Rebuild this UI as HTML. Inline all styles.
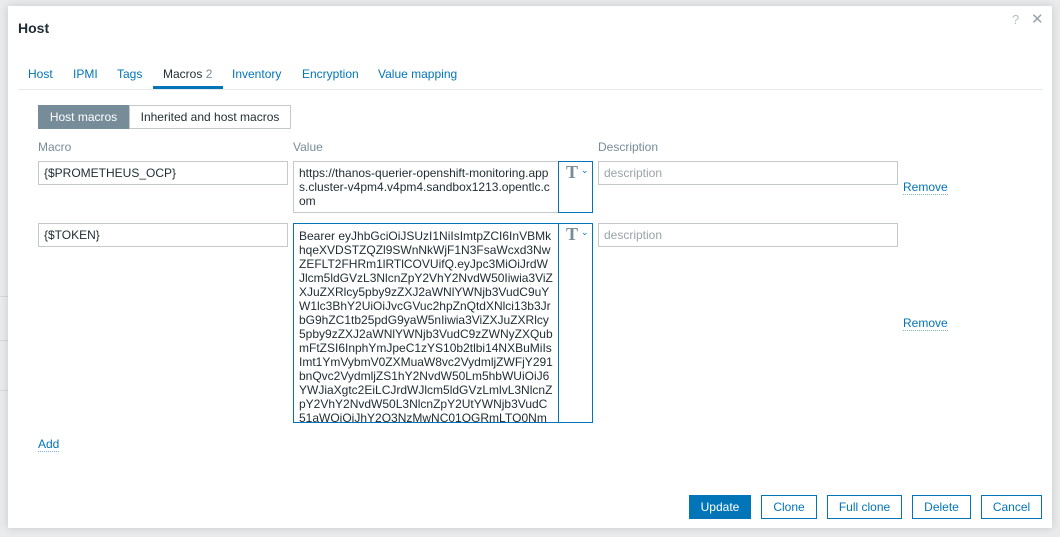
<!DOCTYPE html>
<html><head><style>
*{box-sizing:border-box;margin:0;padding:0}
body{width:1060px;height:537px;background:#e9ebec;font-family:"Liberation Sans",sans-serif;font-size:12px;color:#1f2c33;position:relative;overflow:hidden}
.a{position:absolute}
.dlg{left:8px;top:6px;width:1044px;height:522px;background:#fff;box-shadow:0 0 8px rgba(0,0,0,.15)}
.tab{top:67px;font-size:12px;color:#0275b8}
.inp{border:1px solid #c5c9cc;background:#fff;padding:4px 5px;font-size:12px}
.ph{color:#9aa3a8}
.lbl{color:#768d99}
.link{color:#0275b8;border-bottom:1px dotted #7fb6da;line-height:14px}
.btn{top:495px;height:24px;border:1px solid #0275b8;color:#0275b8;text-align:center;line-height:22px;background:#fff}
.ta{border:1px solid #0275b8;font-size:12px;line-height:14px;padding:5px 5px;overflow:hidden;word-break:break-all;color:#1f2c33}
.tb{border:1px solid #0275b8;border-left:none;}
.T{font-family:"Liberation Serif",serif;font-size:18px;color:#768d99;font-weight:bold;left:7px;top:0}
.car{left:22px;top:3px;color:#0275b8;font-size:9px}
</style></head><body>
<div class="a" style="left:0;top:296px;width:8px;height:1px;background:#d5d9db"></div>
<div class="a" style="left:0;top:340px;width:8px;height:1px;background:#d5d9db"></div>
<div class="a" style="left:0;top:390px;width:8px;height:1px;background:#d5d9db"></div>
<div class="a dlg"></div>
<div class="a" style="left:18px;top:20px;font-size:14px;font-weight:bold;color:#1f2c33">Host</div>
<div class="a" style="left:1012px;top:12px;color:#b5bcc0;font-size:13px">?</div>
<div class="a" style="left:1031px;top:10px;color:#9aa3a8;font-size:15px">✕</div>
<div class="a tab" style="left:28px">Host</div>
<div class="a tab" style="left:73px">IPMI</div>
<div class="a tab" style="left:117px">Tags</div>
<div class="a tab" style="left:163px;color:#1f2c33">Macros <span style="color:#768d99">2</span></div>
<div class="a tab" style="left:232px">Inventory</div>
<div class="a tab" style="left:302px">Encryption</div>
<div class="a tab" style="left:378px">Value mapping</div>
<div class="a" style="left:18px;top:89px;width:1025px;height:1px;background:#e6e8e9"></div>
<div class="a" style="left:153px;top:86px;width:70px;height:3px;background:#0275b8"></div>
<div class="a" style="left:38px;top:105px;width:91px;height:24px;background:#768d99;color:#fff;line-height:24px;text-align:center">Host macros</div>
<div class="a" style="left:129px;top:105px;width:162px;height:24px;border:1px solid #c5c9cc;line-height:22px;text-align:center">Inherited and host macros</div>
<div class="a lbl" style="left:38px;top:140px">Macro</div>
<div class="a lbl" style="left:293px;top:140px">Value</div>
<div class="a lbl" style="left:598px;top:140px">Description</div>
<div class="a inp" style="left:38px;top:161px;width:250px;height:24px">{$PROMETHEUS_OCP}</div>
<div class="a inp" style="left:293px;top:161px;width:266px;height:52px;line-height:14px;padding-top:4px;word-break:break-all">https://thanos-querier-openshift-monitoring.apps.cluster-v4pm4.v4pm4.sandbox1213.opentlc.com</div>
<div class="a tb" style="left:558px;top:161px;width:35px;height:52px;border-left:1px solid #0275b8"><span class="a T">T</span><span class="a car">⌄</span></div>
<div class="a inp ph" style="left:598px;top:161px;width:300px;height:24px">description</div>
<div class="a link" style="left:903px;top:180px">Remove</div>
<div class="a inp" style="left:38px;top:223px;width:250px;height:24px">{$TOKEN}</div>
<div class="a ta" style="left:293px;top:223px;width:266px;height:200px">Bearer eyJhbGciOiJSUzI1NiIsImtpZCI6InVBMkhqeXVDSTZQZl9SWnNkWjF1N3FsaWcxd3NwZEFLT2FHRm1lRTlCOVUifQ.eyJpc3MiOiJrdWJlcm5ldGVzL3NlcnZpY2VhY2NvdW50Iiwia3ViZXJuZXRlcy5pby9zZXJ2aWNlYWNjb3VudC9uYW1lc3BhY2UiOiJvcGVuc2hpZnQtdXNlci13b3JrbG9hZC1tb25pdG9yaW5nIiwia3ViZXJuZXRlcy5pby9zZXJ2aWNlYWNjb3VudC9zZWNyZXQubmFtZSI6InphYmJpeC1zYS10b2tlbi14NXBuMiIsImt1YmVybmV0ZXMuaW8vc2VydmljZWFjY291bnQvc2VydmljZS1hY2NvdW50Lm5hbWUiOiJ6YWJiaXgtc2EiLCJrdWJlcm5ldGVzLmlvL3NlcnZpY2VhY2NvdW50L3NlcnZpY2UtYWNjb3VudC51aWQiOiJhY2Q3NzMwNC01OGRmLTQ0Nm</div>
<div class="a tb" style="left:558px;top:223px;width:35px;height:200px;border-left:1px solid #0275b8"><span class="a T">T</span><span class="a car">⌄</span></div>
<div class="a inp ph" style="left:598px;top:223px;width:300px;height:24px">description</div>
<div class="a link" style="left:903px;top:316px">Remove</div>
<div class="a link" style="left:38px;top:437px">Add</div>
<div class="a btn" style="left:689px;width:62px;background:#0275b8;color:#fff">Update</div>
<div class="a btn" style="left:761px;width:56px">Clone</div>
<div class="a btn" style="left:827px;width:75px">Full clone</div>
<div class="a btn" style="left:912px;width:59px">Delete</div>
<div class="a btn" style="left:981px;width:61px">Cancel</div>
</body></html>
